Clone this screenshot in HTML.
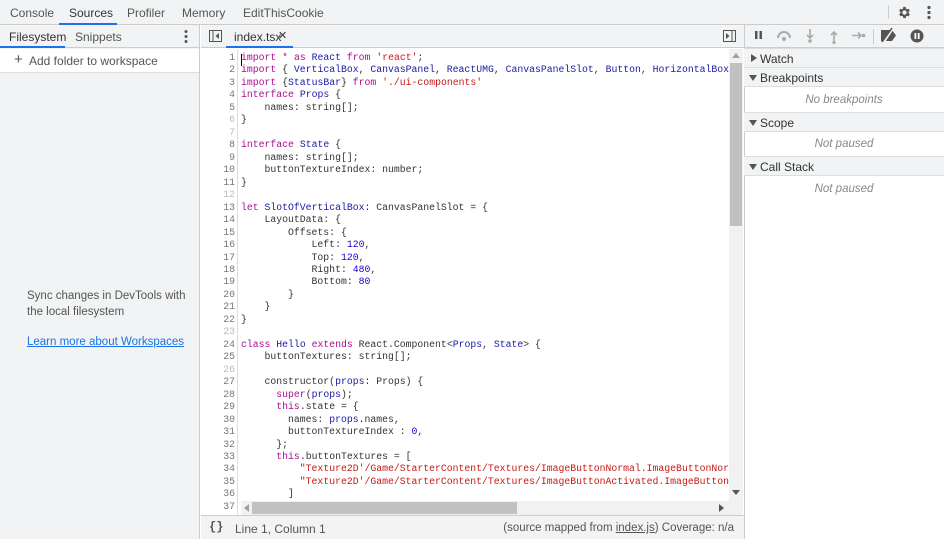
<!DOCTYPE html>
<html><head><meta charset="utf-8"><style>
*{box-sizing:border-box;margin:0;padding:0}
body{width:944px;height:539px;overflow:hidden;background:#fff;font-family:"Liberation Sans",sans-serif;font-size:12px;color:#333;position:relative}
.abs{position:absolute}
.topbar{left:0;top:0;width:944px;height:25px;background:#f1f3f4;border-bottom:1px solid #ccc}
.tab{position:absolute;top:6px;font-size:12px;color:#555}
.left{left:0;top:25px;width:200px;height:514px;background:#f1f3f4;border-right:1px solid #ccc}
.editor{left:201px;top:25px;width:543px;height:514px;background:#fff}
.right{left:744px;top:25px;width:200px;height:514px;background:#fff;border-left:1px solid #ccc}
.tb2{height:23px;background:#f1f3f4;border-bottom:1px solid #ccc}
.code{position:absolute;left:0;top:52px;font-family:"Liberation Mono",monospace;font-size:9.8px;line-height:12.47px;white-space:pre}
.ln{position:absolute;left:201px;top:52px;width:34px;text-align:right;font-family:"Liberation Mono",monospace;font-size:9.8px;line-height:12.47px;color:#777;white-space:pre}
.k{color:#aa0d91}.t{color:#1a1aa6}.s{color:#c41a16}.n{color:#1c00cf}
.sec{position:absolute;left:744px;width:200px;height:20px;background:#f1f3f4;border-top:1px solid #ddd;border-bottom:1px solid #ddd;font-size:12px;padding:3px 0 0 16px;color:#333}
.sec:before{content:"";position:absolute;left:5px;top:7px;border-left:4px solid transparent;border-right:4px solid transparent;border-top:6px solid #555}
.sec.c:before{left:7px;top:5px;border-top:4px solid transparent;border-bottom:4px solid transparent;border-left:6px solid #555;border-right:0}
.np{position:absolute;left:744px;width:200px;text-align:center;font-style:italic;color:#888;font-size:11.5px}
</style></head><body>
<div class="abs topbar">
<span class="tab" style="left:10px">Console</span>
<span class="tab" style="left:69px;color:#333">Sources</span>
<div class="abs" style="left:59px;top:23px;width:58px;height:2px;background:#1a73e8"></div>
<span class="tab" style="left:127px">Profiler</span>
<span class="tab" style="left:182px">Memory</span>
<span class="tab" style="left:243px">EditThisCookie</span>
<div class="abs" style="left:888px;top:5px;width:1px;height:14px;background:#ccc"></div>
<svg class="abs" style="left:897px;top:5px" width="15" height="15" viewBox="0 0 24 24"><path fill="#555" d="M19.4 13a7.5 7.5 0 000-2l2.1-1.6-2-3.5-2.5 1a7 7 0 00-1.7-1L15 3h-4l-.4 2.9a7 7 0 00-1.7 1l-2.5-1-2 3.5L6.6 11a7.5 7.5 0 000 2l-2.1 1.6 2 3.5 2.5-1a7 7 0 001.7 1L11 21h4l.4-2.9a7 7 0 001.7-1l2.5 1 2-3.5zM13 15.5a3.5 3.5 0 110-7 3.5 3.5 0 010 7z" transform="translate(-1 0)"/></svg>
<svg class="abs" style="left:927px;top:5px" width="4" height="15"><circle cx="2" cy="2.5" r="1.6" fill="#555"/><circle cx="2" cy="7.5" r="1.6" fill="#555"/><circle cx="2" cy="12.5" r="1.6" fill="#555"/></svg>
</div>

<div class="abs left">
<div class="tb2" style="position:relative">
<span class="abs" style="left:9px;top:5px;color:#333">Filesystem</span>
<div class="abs" style="left:0;top:21px;width:65px;height:2px;background:#1a73e8"></div>
<span class="abs" style="left:75px;top:5px;color:#555">Snippets</span>
<svg class="abs" style="left:184px;top:4px" width="4" height="15"><circle cx="2" cy="2.5" r="1.5" fill="#555"/><circle cx="2" cy="7.5" r="1.5" fill="#555"/><circle cx="2" cy="12.5" r="1.5" fill="#555"/></svg>
</div>
<div class="abs" style="left:0;top:24px;width:199px;height:24px;background:#fff;border-bottom:1px solid #ddd"></div>
<span class="abs" style="left:14px;top:26px;font-size:15px;color:#555">+</span>
<span class="abs" style="left:29px;top:29px;color:#555">Add folder to workspace</span>
<div class="abs" style="left:27px;top:263px;color:#555;line-height:16px;font-size:11.5px">Sync changes in DevTools with<br>the local filesystem</div>
<div class="abs" style="left:27px;top:311px;color:#1a73e8;text-decoration:underline;font-size:11.5px">Learn more about Workspaces</div>
</div>

<div class="abs editor">
<div class="tb2" style="position:relative">
<svg class="abs" style="left:8px;top:5px" width="13" height="12"><rect x=".5" y=".5" width="12" height="11" fill="none" stroke="#555"/><line x1="4" y1="1" x2="4" y2="11" stroke="#555"/><path d="M10 3L6.5 6 10 9z" fill="#555"/></svg>
<span class="abs" style="left:33px;top:5px;color:#333">index.tsx</span>
<span class="abs" style="left:77px;top:4px;color:#333;font-size:11px">✕</span>
<div class="abs" style="left:25px;top:21px;width:67px;height:2px;background:#1a73e8"></div>
<svg class="abs" style="left:522px;top:5px" width="13" height="12"><rect x=".5" y=".5" width="12" height="11" fill="none" stroke="#555"/><line x1="9" y1="1" x2="9" y2="11" stroke="#555"/><path d="M3 3L6.5 6 3 9z" fill="#555"/></svg>
</div>
<div class="abs" style="left:36px;top:24px;width:1px;height:467px;background:#ddd"></div>
<div class="abs" style="left:40px;top:29px;width:1px;height:12px;background:#000"></div>
<div class="abs" style="left:528px;top:24px;width:14px;height:467px;background:#f1f1f1"></div>
<div class="abs" style="left:529px;top:38px;width:12px;height:163px;background:#c1c1c1"></div>
<svg class="abs" style="left:531px;top:28px" width="8" height="5"><path d="M0 5L4 0 8 5z" fill="#a0a0a0"/></svg>
<svg class="abs" style="left:531px;top:465px" width="8" height="5"><path d="M0 0L4 5 8 0z" fill="#555"/></svg>
<div class="abs" style="left:40px;top:476px;width:488px;height:14px;background:#f1f1f1"></div>
<div class="abs" style="left:51px;top:477px;width:265px;height:12px;background:#c1c1c1"></div>
<svg class="abs" style="left:43px;top:479px" width="5" height="8"><path d="M5 0L0 4 5 8z" fill="#a0a0a0"/></svg>
<svg class="abs" style="left:518px;top:479px" width="5" height="8"><path d="M0 0L5 4 0 8z" fill="#555"/></svg>
<div class="abs" style="left:0;top:490px;width:543px;height:24px;background:#f1f3f4;border-top:1px solid #ccc"></div>
<span class="abs" style="left:8px;top:495px;font-family:'Liberation Mono',monospace;font-weight:bold;color:#555;font-size:12px">{}</span>
<span class="abs" style="left:34px;top:497px;color:#555">Line 1, Column 1</span>
<span class="abs" style="right:10px;top:497px;color:#555;white-space:nowrap;font-size:11.5px">(source mapped from <u>index.js</u>) Coverage: n/a</span>
</div>
<div class="ln">1
2
3
4
5
<span style="color:#bbb">6</span>
<span style="color:#bbb">7</span>
8
9
10
11
<span style="color:#bbb">12</span>
13
14
15
16
17
18
19
20
21
22
<span style="color:#bbb">23</span>
24
25
<span style="color:#bbb">26</span>
27
28
29
30
31
32
33
34
35
36
37</div>
<div class="abs" style="left:241px;top:0;width:488px;height:500px;overflow:hidden"><div class="code"><span class="k">import</span> <span class="k">*</span> <span class="k">as</span> <span class="t">React</span> <span class="k">from</span> <span class="s">'react'</span>;
<span class="k">import</span> { <span class="t">VerticalBox</span>, <span class="t">CanvasPanel</span>, <span class="t">ReactUMG</span>, <span class="t">CanvasPanelSlot</span>, <span class="t">Button</span>, <span class="t">HorizontalBox</span>
<span class="k">import</span> {<span class="t">StatusBar</span>} <span class="k">from</span> <span class="s">'./ui-components'</span>
<span class="k">interface</span> <span class="t">Props</span> {
    names: string[];
}

<span class="k">interface</span> <span class="t">State</span> {
    names: string[];
    buttonTextureIndex: number;
}

<span class="k">let</span> <span class="t">SlotOfVerticalBox</span>: CanvasPanelSlot = {
    LayoutData: {
        Offsets: {
            Left: <span class="n">120</span>,
            Top: <span class="n">120</span>,
            Right: <span class="n">480</span>,
            Bottom: <span class="n">80</span>
        }
    }
}

<span class="k">class</span> <span class="t">Hello</span> <span class="k">extends</span> React.Component&lt;<span class="t">Props</span>, <span class="t">State</span>&gt; {
    buttonTextures: string[];

    constructor(<span class="t">props</span>: Props) {
      <span class="k">super</span>(<span class="t">props</span>);
      <span class="k">this</span>.state = {
        names: <span class="t">props</span>.names,
        buttonTextureIndex : <span class="n">0</span>,
      };
      <span class="k">this</span>.buttonTextures = [
          <span class="s">"Texture2D'/Game/StarterContent/Textures/ImageButtonNormal.ImageButtonNormal'"</span>
          <span class="s">"Texture2D'/Game/StarterContent/Textures/ImageButtonActivated.ImageButtonActivated'"</span>
        ]
</div></div>

<div class="abs right">
<div class="tb2" style="position:relative">
<svg class="abs" style="left:0;top:0" width="200" height="23">
<rect x="10" y="6" width="2.5" height="8" fill="#555"/><rect x="14.5" y="6" width="2.5" height="8" fill="#555"/>
<path d="M33 13a6 6 0 0112 0" fill="none" stroke="#aaa" stroke-width="2"/><circle cx="39" cy="14" r="2" fill="#aaa"/>
<path d="M65 4v9M62 10l3 3 3-3" fill="none" stroke="#aaa" stroke-width="1.6"/><circle cx="65" cy="16" r="1.8" fill="#aaa"/>
<path d="M89 16V7M86 10l3-3 3 3" fill="none" stroke="#aaa" stroke-width="1.6"/><circle cx="89" cy="17.5" r="1.6" fill="#aaa"/>
<path d="M107 10.5h9M113 7.5l3 3-3 3" fill="none" stroke="#aaa" stroke-width="1.6"/><circle cx="118.5" cy="10.5" r="1.8" fill="#aaa"/>
<rect x="128" y="4" width="1" height="15" fill="#ccc"/>
<path d="M136 5h11l4 5.5-4 5.5h-11z" fill="#555"/><path d="M138 18L148 3" stroke="#f1f3f4" stroke-width="2.5"/><path d="M137 17L147 3" stroke="#555" stroke-width="1.5"/>
<circle cx="172" cy="11" r="6.5" fill="#555"/><rect x="169.5" y="8" width="1.8" height="6" fill="#fff"/><rect x="172.8" y="8" width="1.8" height="6" fill="#fff"/>
</svg>
</div>
</div>
<div class="sec c" style="top:48px">Watch</div>
<div class="sec" style="top:67px">Breakpoints</div>
<div class="np" style="top:94px">No breakpoints</div>
<div class="sec" style="top:112px">Scope</div>
<div class="np" style="top:138px">Not paused</div>
<div class="sec" style="top:156px">Call Stack</div>
<div class="np" style="top:183px">Not paused</div>
</body></html>
